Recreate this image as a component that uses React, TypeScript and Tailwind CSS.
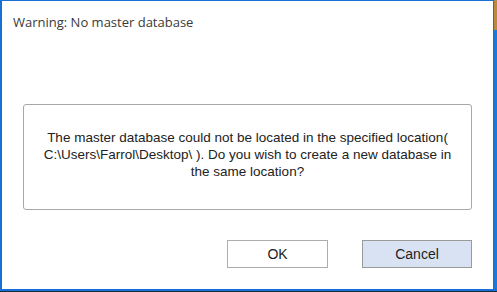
export default function App() {
  return (
    <div className="w-[497px] h-[292px] bg-[#1b2a3a] flex flex-col overflow-hidden">
      <div className="flex h-[289px]">
        {/* dialog window */}
        <div className="w-[494px] h-[289px] bg-white border-l-2 border-t border-r border-[#1670d6] flex flex-col">
          <div className="pl-[11px] pt-[11px] text-[13px] leading-[20px] text-[#3a3a3a] font-['Open_Sans',sans-serif]">
            Warning: No master database
          </div>
          <div className="ml-[21px] mt-[72px] w-[449px] h-[106px] border border-[#a8a8a8] rounded-[3px] flex items-center justify-center pb-[5px]">
            <p className="text-center text-[13.5px] leading-[17px] text-[#222] font-['Liberation_Sans',Arial,sans-serif]">
              The master database could not be located in the specified location(
              <br />
              C:\Users\Farrol\Desktop\ ). Do you wish to create a new database in
              <br />
              the same location?
            </p>
          </div>
          <div className="ml-[225px] mt-[30px] flex gap-[34px] font-['Liberation_Sans',Arial,sans-serif] text-[14px] text-[#222]">
            <button className="w-[101px] h-[28px] border border-[#adadad] bg-white flex items-center justify-center">
              OK
            </button>
            <button className="w-[110px] h-[28px] border border-[#9a9a9a] bg-[#d9e2f3] flex items-center justify-center">
              Cancel
            </button>
          </div>
        </div>
        <div className="flex-1 flex flex-col">
          <div className="h-[30px] bg-[#b88a3e]" />
          <div className="flex-1 bg-[#1a7ad8]" />
        </div>
      </div>
      <div className="h-[2px] bg-[#1670d6]" />
    </div>
  );
}
